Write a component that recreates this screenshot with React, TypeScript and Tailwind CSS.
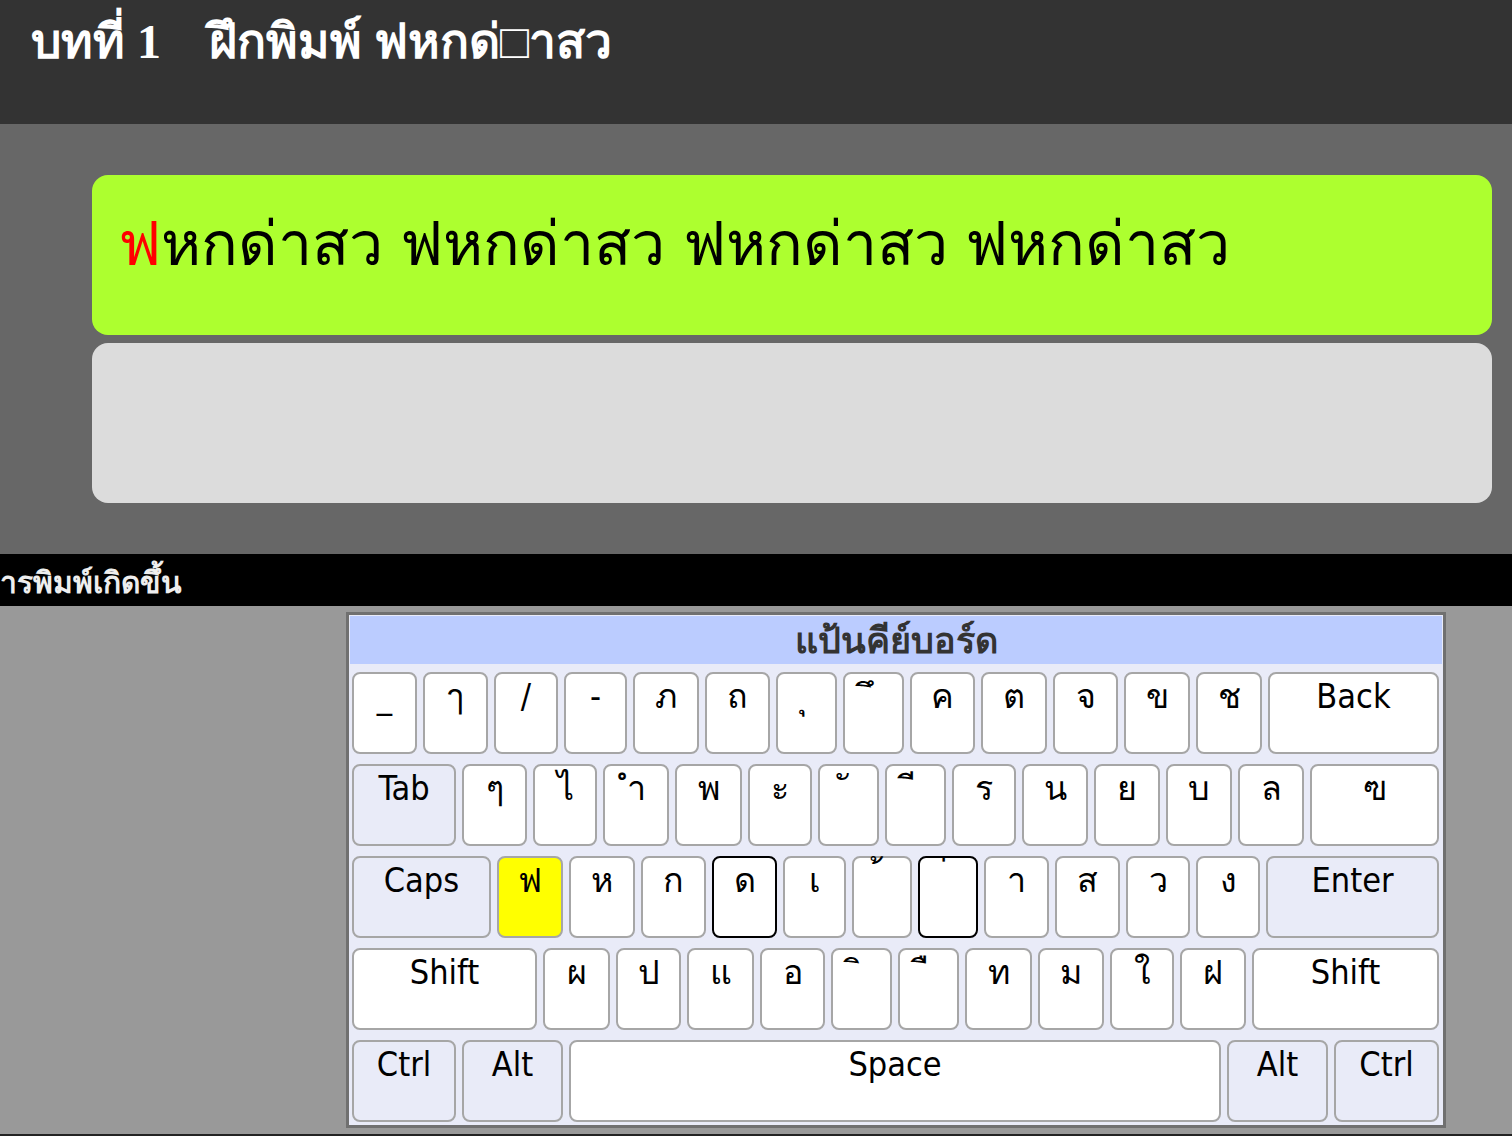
import clsx from 'clsx';

type Key = { label: string; w: string; kind?: 'mod' | 'wide' | 'hot' | 'home' };

const rows: Key[][] = [
  [
    { label: '_', w: 'w-[65px]' },
    { label: 'ๅ', w: 'w-[65px]' },
    { label: '/', w: 'w-[64px]' },
    { label: '-', w: 'w-[63px]' },
    { label: 'ภ', w: 'w-[66px]' },
    { label: 'ถ', w: 'w-[65px]' },
    { label: 'ุ', w: 'w-[61px]' },
    { label: 'ึ', w: 'w-[61px]' },
    { label: 'ค', w: 'w-[65px]' },
    { label: 'ต', w: 'w-[66px]' },
    { label: 'จ', w: 'w-[65px]' },
    { label: 'ข', w: 'w-[66px]' },
    { label: 'ช', w: 'w-[66px]' },
    { label: 'Back', w: 'w-[171px]', kind: 'wide' },
  ],
  [
    { label: 'Tab', w: 'w-[104px]', kind: 'mod' },
    { label: 'ๆ', w: 'w-[65px]' },
    { label: 'ไ', w: 'w-[64px]' },
    { label: 'ำ', w: 'w-[66px]' },
    { label: 'พ', w: 'w-[67px]' },
    { label: 'ะ', w: 'w-[64px]' },
    { label: 'ั', w: 'w-[61px]' },
    { label: 'ี', w: 'w-[61px]' },
    { label: 'ร', w: 'w-[64px]' },
    { label: 'น', w: 'w-[66px]' },
    { label: 'ย', w: 'w-[66px]' },
    { label: 'บ', w: 'w-[66px]' },
    { label: 'ล', w: 'w-[66px]' },
    { label: 'ฃ', w: 'w-[129px]' },
  ],
  [
    { label: 'Caps', w: 'w-[139px]', kind: 'mod' },
    { label: 'ฟ', w: 'w-[66px]', kind: 'hot' },
    { label: 'ห', w: 'w-[66px]' },
    { label: 'ก', w: 'w-[65px]' },
    { label: 'ด', w: 'w-[65px]', kind: 'home' },
    { label: 'เ', w: 'w-[63px]' },
    { label: '้', w: 'w-[60px]' },
    { label: '่', w: 'w-[60px]', kind: 'home' },
    { label: 'า', w: 'w-[65px]' },
    { label: 'ส', w: 'w-[65px]' },
    { label: 'ว', w: 'w-[64px]' },
    { label: 'ง', w: 'w-[64px]' },
    { label: 'Enter', w: 'w-[173px]', kind: 'mod' },
  ],
  [
    { label: 'Shift', w: 'w-[185px]', kind: 'wide' },
    { label: 'ผ', w: 'w-[67px]' },
    { label: 'ป', w: 'w-[65px]' },
    { label: 'แ', w: 'w-[67px]' },
    { label: 'อ', w: 'w-[65px]' },
    { label: 'ิ', w: 'w-[61px]' },
    { label: 'ื', w: 'w-[61px]' },
    { label: 'ท', w: 'w-[67px]' },
    { label: 'ม', w: 'w-[66px]' },
    { label: 'ใ', w: 'w-[64px]' },
    { label: 'ฝ', w: 'w-[66px]' },
    { label: 'Shift', w: 'w-[187px]', kind: 'wide' },
  ],
  [
    { label: 'Ctrl', w: 'w-[104px]', kind: 'mod' },
    { label: 'Alt', w: 'w-[101px]', kind: 'mod' },
    { label: 'Space', w: 'w-[652px]', kind: 'wide' },
    { label: 'Alt', w: 'w-[101px]', kind: 'mod' },
    { label: 'Ctrl', w: 'w-[105px]', kind: 'mod' },
  ],
];

const KeyCap = ({ k }: { k: Key }) => (
  <div
    className={clsx(
      'h-[82px] shrink-0 rounded-lg border-2 pt-[5px] text-center text-[34px] leading-none text-black',
      k.w,
      k.kind === 'mod' ? 'bg-[#e9ebf8]' : k.kind === 'hot' ? 'bg-[#ffff00]' : 'bg-white',
      k.kind === 'home' ? 'border-black' : 'border-[#a6a6a6]'
    )}
  >
    {k.label}
  </div>
);

const App = () => {
  return (
    <div className="min-h-[1136px] w-[1512px] overflow-hidden bg-[#999999] font-['DejaVu_Sans_Condensed','DejaVu_Sans',sans-serif]">
      {/* Title */}
      <header className="h-[124px] bg-[#333333] pl-[31px] pt-[12px]">
        <h1 className="whitespace-pre font-['Liberation_Serif',serif] text-[48px] font-semibold leading-tight text-white">
          {'บทที่ 1    ฝึกพิมพ์ ฟหกด่□าสว'}
        </h1>
      </header>

      {/* Practice area */}
      <section className="flex flex-col gap-[8px] bg-[#676767] pb-[51px] pl-[92px] pt-[51px]">
        <div className="flex h-[160px] w-[1400px] items-start rounded-2xl bg-[#adff2f] pl-[26px] pt-[38px]">
          <p className="whitespace-pre text-[61px] font-medium leading-none text-black">
            <span className="text-[#ff0000]">ฟ</span>หกด่าสว ฟหกด่าสว ฟหกด่าสว ฟหกด่าสว
          </p>
        </div>
        <div className="h-[160px] w-[1400px] rounded-2xl bg-[#dcdcdc]" />
      </section>

      {/* Status strip */}
      <div className="flex h-[52px] items-center overflow-hidden bg-black pt-[4px]">
        <p className="whitespace-nowrap text-[30px] font-semibold text-[#eeeeee]">ารพิมพ์เกิดขึ้น</p>
      </div>

      {/* Keyboard */}
      <div className="ml-[346px] mt-[6px] w-[1100px] border-[3px] border-[#707070] bg-[#e9ebf8] p-px">
        <div className="flex h-[48px] items-center justify-center bg-[#bbccff] pt-[2px] text-[36px] font-bold text-[#333333]">
          แป้นคีย์บอร์ด
        </div>
        <div className="flex flex-col gap-[10px] px-[2px] pb-[2px] pt-[8px]">
          {rows.map((row, i) => (
            <div key={i} className="flex gap-[6px]">
              {row.map((k, j) => (
                <KeyCap key={j} k={k} />
              ))}
            </div>
          ))}
        </div>
      </div>
      <div className="mt-[6px] h-[10px] bg-[#222222]" />
    </div>
  );
};

export default App;
